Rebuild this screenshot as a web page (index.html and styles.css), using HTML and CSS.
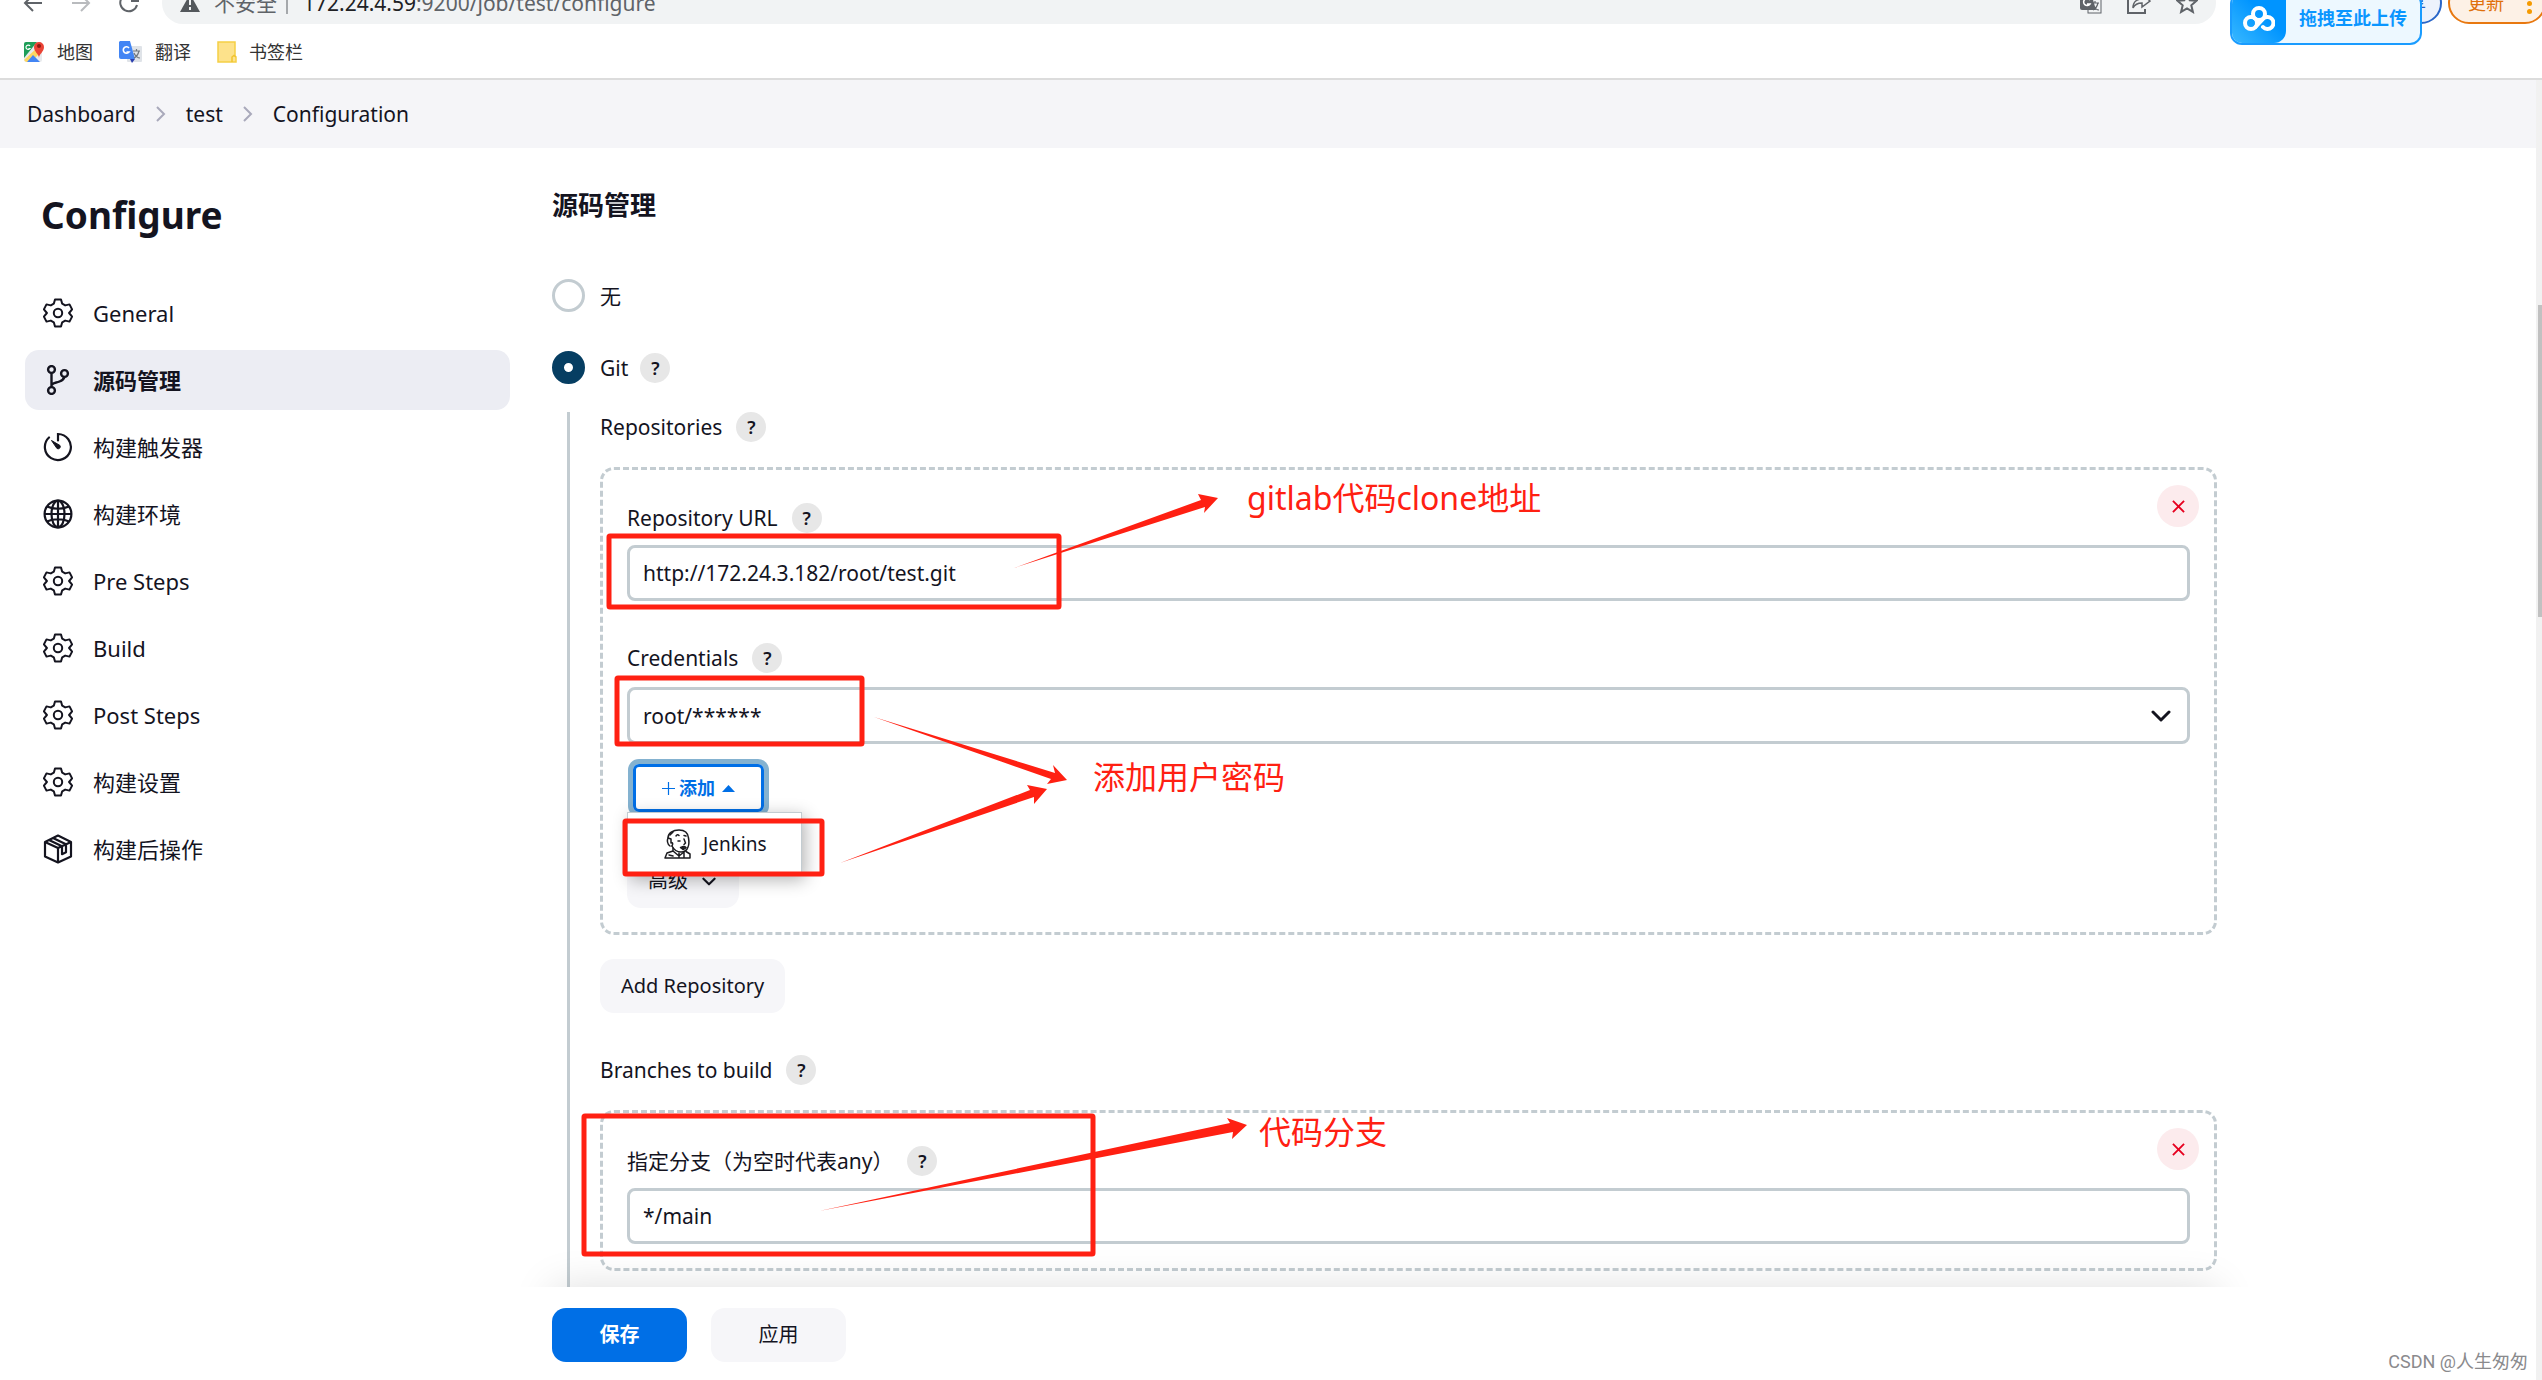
FILE: index.html
```html
<!DOCTYPE html>
<html lang="zh-CN">
<head>
<meta charset="utf-8">
<title>test Config [Jenkins]</title>
<link rel="stylesheet" href="styles.css">
</head>
<body>
<svg class="symbols" aria-hidden="true">
  <symbol id="gear" viewBox="0 0 30 30">
    <path d="M12 1.500h6l1.200 4.200 3 1.700 4.300-1 2.600 5-3 3.600 3 3.600-2.600 5-4.300-1-3 1.700-1.200 4.200h-6l-1.200-4.200-3-1.700-4.300 1-2.600-5 3-3.600-3-3.600 2.600-5 4.300 1 3-1.700z" fill="none" stroke="currentColor" stroke-width="2" stroke-linejoin="round"/>
    <circle cx="15" cy="15" r="4.200" fill="none" stroke="currentColor" stroke-width="2"/>
  </symbol>
  <symbol id="chevron-down" viewBox="0 0 20 12">
    <path d="M2 2l8 8 8-8" fill="none" stroke="currentColor" stroke-width="3" stroke-linecap="round" stroke-linejoin="round"/>
  </symbol>
  <symbol id="cross" viewBox="0 0 14 14">
    <path d="M1 1l12 12M13 1L1 13" stroke="currentColor" stroke-width="2"/>
  </symbol>
</svg>

<header class="browser">
  <div class="toolbar">
    <button class="nav" aria-label="Back"><svg width="20" height="20" viewBox="0 0 20 20"><path d="M19 10H2M10 2l-8 8 8 8" fill="none" stroke="#5f6368" stroke-width="2"/></svg></button>
    <button class="nav" aria-label="Forward"><svg width="20" height="20" viewBox="0 0 20 20"><path d="M1 10h17M10 2l8 8-8 8" fill="none" stroke="#b9bbbe" stroke-width="2"/></svg></button>
    <button class="nav" aria-label="Reload"><svg width="20" height="20" viewBox="0 0 20 20"><path d="M18 12a8.500 8.500 0 1 1-2-8M19 1v7h-7" fill="none" stroke="#5f6368" stroke-width="2"/></svg></button>
    <div class="address">
      <svg width="20" height="18" viewBox="0 0 20 18"><path d="M10 0l10 18H0z" fill="#54585c"/><path d="M10 6v5M10 13v3" stroke="#f1f3f4" stroke-width="2"/></svg>
      <span class="insecure">不安全</span>
      <span class="divider"></span>
      <span class="url"><b>172.24.4.59</b>:9200/job/test/configure</span>
      <span class="address-actions">
        <svg width="22" height="22" viewBox="0 0 22 22"><rect x="8" y="6" width="13" height="15" fill="#f1f3f4" stroke="#5f6368" stroke-width="1"/><path d="M0 1h11l5 17H2a2 2 0 0 1-2-2z" fill="#5f6368"/><path d="M10 8a3.500 3.500 0 1 0 0 4H7" fill="none" stroke="#fff" stroke-width="1.500"/><path d="M12 11h7M15 9v2M18 11c-1 4-3 6-5 7M13 13c1 3 4 5 6 5" fill="none" stroke="#5f6368" stroke-width="1.200"/></svg>
        <svg width="24" height="22" viewBox="0 0 24 22"><path d="M6 6H1v15h17v-4" fill="none" stroke="#5f6368" stroke-width="2"/><path d="M6 16c0-7 5-9 9-9V2l8 7-8 6v-4c-4 0-7 1-9 5z" fill="none" stroke="#5f6368" stroke-width="1.500"/></svg>
        <svg width="22" height="22" viewBox="0 0 22 22"><path d="M11 2l2.700 6.200 6.800.6-5.200 4.500 1.600 6.600L11 16.400 5.100 19.900l1.600-6.600L1.500 8.800l6.800-.6z" fill="none" stroke="#5f6368" stroke-width="2"/></svg>
      </span>
    </div>
    <div class="toolbar-end">
      <button class="pill pill-share">分享</button>
      <button class="pill pill-update">更新<span class="dots"><i></i><i></i><i></i></span></button>
    </div>
  </div>
  <nav class="bookmarks">
    <a href="#maps">
      <svg width="22" height="22" viewBox="0 0 22 22"><rect x="1" y="1" width="18" height="20" rx="2" fill="#e8eaed"/><path d="M1 3a2 2 0 0 1 2-2h11L1 17z" fill="#1e9e58"/><path d="M1 19L15 6l4 4-11 11H3z" fill="#fdd663"/><path d="M4 21l6-7 7 7z" fill="#4285f4"/><path d="M16 17c0-4-5-6-5-11a5 5 0 0 1 10 0c0 5-5 7-5 11z" fill="#ea4335"/><circle cx="16" cy="5" r="2" fill="#8c1a12"/><path d="M7 5a2.200 2.200 0 1 0 0 2.500H5.500" fill="none" stroke="#fff" stroke-width="1.200"/></svg>
      地图</a>
    <a href="#translate">
      <svg width="24" height="22" viewBox="0 0 24 22"><rect x="8" y="5" width="15" height="16" rx="1" fill="#dfe3e8"/><path d="M1 0h10l5 18H2a2 2 0 0 1-2-2V1z" fill="#4285f4"/><path d="M11 18h5l-3 4z" fill="#2b3fae"/><path d="M10 7a3.200 3.200 0 1 0 0 4H7.500" fill="none" stroke="#fff" stroke-width="1.600"/><path d="M14 10h7M17.500 8v2M20 10c-1 4-3 6-5 7M15 12c1 3 4 5 6 5" fill="none" stroke="#70787f" stroke-width="1.200"/></svg>
      翻译</a>
    <a href="#bar">
      <svg width="20" height="22" viewBox="0 0 20 22"><path d="M1 1h17v14l1 1v5H1z" fill="#fde28b" stroke="#f5cf45" stroke-width="1.500"/><path d="M15 21v-5l2-1.500 2 1.500" fill="none" stroke="#f0c32f" stroke-width="1.500"/></svg>
      书签栏</a>
  </nav>
  <button class="upload">
    <span class="upload-logo"><svg width="32" height="26" viewBox="0 0 32 26"><g fill="none" stroke="#fff" stroke-width="4"><circle cx="16" cy="8" r="6"/><circle cx="8" cy="17" r="6"/><path d="M12.500 21l7.500-8a6 6 0 1 1 0 8" stroke-linecap="round"/></g></svg></span>
    <span class="upload-text">拖拽至此上传</span>
  </button>
</header>

<div class="app">
  <div class="page">
    <nav class="breadcrumbs">
      <a href="#dashboard">Dashboard</a>
      <svg width="10" height="16" viewBox="0 0 10 16"><path d="M1 1l7 7-7 7" fill="none" stroke="#a9a9bb" stroke-width="2"/></svg>
      <a href="#test">test</a>
      <svg width="10" height="16" viewBox="0 0 10 16"><path d="M1 1l7 7-7 7" fill="none" stroke="#a9a9bb" stroke-width="2"/></svg>
      <a href="#configuration">Configuration</a>
    </nav>

    <div class="columns">
      <aside class="sidebar">
        <h1>Configure</h1>
        <nav class="tasks">
          <a href="#general"><svg><use href="#gear"/></svg>General</a>
          <a href="#scm" class="active"><svg viewBox="0 0 30 30"><g fill="none" stroke="currentColor" stroke-width="2.400"><circle cx="8.500" cy="4.500" r="3.400"/><circle cx="8.500" cy="25.500" r="3.400"/><circle cx="21.500" cy="8.500" r="3.400"/><path d="M8.500 8v14M8.500 20c2-3 5-2 8-3.500 3-1.200 4.500-3 5-4.500"/></g></svg>源码管理</a>
          <a href="#triggers"><svg viewBox="0 0 30 30"><path d="M6 5.500A13 13 0 1 0 15 2v6.500" fill="none" stroke="currentColor" stroke-width="2.200" stroke-linecap="round"/><path d="M8.500 8.500l8.500 5a2.200 2.200 0 0 1-3 3z" fill="currentColor" stroke="currentColor" stroke-linejoin="round"/></svg>构建触发器</a>
          <a href="#environment"><svg viewBox="0 0 30 30"><g fill="none" stroke="currentColor" stroke-width="2.200"><circle cx="15" cy="15" r="13.400"/><ellipse cx="15" cy="15" rx="6.500" ry="13.400"/><path d="M15 1.600v26.800M1.600 15h26.800M4 7.500c6 3 16 3 22 0M4 22.500c6-3 16-3 22 0"/></g></svg>构建环境</a>
          <a href="#pre"><svg><use href="#gear"/></svg>Pre Steps</a>
          <a href="#build"><svg><use href="#gear"/></svg>Build</a>
          <a href="#post"><svg><use href="#gear"/></svg>Post Steps</a>
          <a href="#settings"><svg><use href="#gear"/></svg>构建设置</a>
          <a href="#actions"><svg viewBox="0 0 30 30"><g fill="none" stroke="currentColor" stroke-width="2.200" stroke-linejoin="round"><path d="M15 1.500L28 8v14.500L15 28.500 2 22.500V8z"/><path d="M2 8l13 6 13-6M15 14v14.500M6 6l13 6.200v8l4-2v-8L10 4"/></g></svg>构建后操作</a>
        </nav>
      </aside>

      <main class="config">
        <form class="form">
          <h2>源码管理</h2>
          <div class="choice">
            <input type="radio" name="scm" id="scm-none"><label for="scm-none">无</label>
          </div>
          <div class="choice">
            <input type="radio" name="scm" id="scm-git" checked><label for="scm-git">Git</label><button type="button" class="help">?</button>
          </div>
          <div class="nested">
            <div class="caption"><span>Repositories</span><button type="button" class="help">?</button></div>
            <section class="chunk">
              <button type="button" class="remove" aria-label="Remove"><svg width="13" height="13"><use href="#cross"/></svg></button>
              <div class="caption"><label for="url">Repository URL</label><button type="button" class="help">?</button></div>
              <input class="field" id="url" type="text" value="http://172.24.3.182/root/test.git">
              <div class="caption next"><label for="cred">Credentials</label><button type="button" class="help">?</button></div>
              <div class="select">
                <select class="field" id="cred"><option>root/******</option></select>
                <svg width="20" height="12"><use href="#chevron-down"/></svg>
              </div>
              <div class="add">
                <button type="button" class="add-button">
                  <svg width="13" height="13" viewBox="0 0 13 13"><path d="M6.500 0v13M0 6.500h13" stroke="currentColor" stroke-width="1.200"/></svg>添加<svg class="caret" width="13" height="7" viewBox="0 0 13 7"><path d="M0 7l6.500-7L13 7z" fill="currentColor"/></svg>
                </button>
                <div class="menu">
                  <a href="#jenkins">
                    <svg width="27" height="30" viewBox="0 0 27 30"><g fill="none" stroke="#1b1b1f" stroke-width="1.500" stroke-linejoin="round" stroke-linecap="round"><path d="M6 17C3 15 3 11 4 9c0-5 5-8 11-8 6 0 9 3 9.500 8 .7 4 .5 7-.5 9-1 3-4 5-7 5-4 0-7-2-9-6"/><path d="M4 9l3 1v4c2-1 2 1 1 3M6 6l3-3M12 7c1-1.500 2-1.500 3-.5M20 6.500l2 .5M14 12h2M20 10l1.500 4-1.500 1.500M17 18.500c2-1.500 4-1 5 0"/><path d="M9 19v3l-6 2-2 5h25v-4l-4-2.500M9 22l6 5 5-4M15 24v5M20 23v6M5 26l4 1"/><path d="M16.500 18.500l5 .5-2.500 1.500z" fill="#1b1b1f"/></g></svg>
                    Jenkins</a>
                </div>
              </div>
              <button type="button" class="button advanced">高级<svg width="14" height="9"><use href="#chevron-down"/></svg></button>
            </section>
            <button type="button" class="button add-repo">Add Repository</button>
            <div class="caption next"><span>Branches to build</span><button type="button" class="help">?</button></div>
            <section class="chunk">
              <button type="button" class="remove" aria-label="Remove"><svg width="13" height="13"><use href="#cross"/></svg></button>
              <div class="caption"><label for="branch">指定分支（为空时代表any）</label><button type="button" class="help">?</button></div>
              <input class="field" id="branch" type="text" value="*/main">
            </section>
          </div>
        </form>
        <div class="bottom-bar">
          <button class="button primary">保存</button>
          <button class="button">应用</button>
        </div>
      </main>
    </div>
  </div>
  <div class="scrollbar"><div class="thumb"></div></div>
</div>

<svg class="annotations">
  <g fill="none" stroke="#ff2012" stroke-width="5" stroke-linejoin="round">
    <rect x="609" y="536" width="450" height="71" rx="1"/>
    <rect x="617" y="678" width="245" height="66" rx="1"/>
    <rect x="625" y="821" width="197" height="53" rx="1"/>
    <rect x="584" y="1116" width="509" height="138" rx="1"/>
  </g>
  <g fill="#ff2012">
    <path d="M1014 568L1201 500 1198 494 1218 498 1204 513 1205 507z"/>
    <path d="M874 717L1055 773 1053 765 1067 780 1047 784 1051 779z"/>
    <path d="M840 863L1030 790 1027 785 1047 789 1034 804 1034 797z"/>
    <path d="M819 1211L1230 1123 1227 1118 1247 1125 1232 1139 1233 1132z"/>
  </g>
  <g class="note">
    <text x="1247" y="510">gitlab代码clone地址</text>
    <text x="1093" y="789">添加用户密码</text>
    <text x="1259" y="1144">代码分支</text>
  </g>
</svg>
<div class="watermark">CSDN @人生匆匆</div>
</body>
</html>
```

FILE: styles.css
```css
* { box-sizing: border-box; }

body {
  margin: 0;
  height: 100vh;
  display: flex;
  flex-direction: column;
  position: relative;
  overflow: hidden;
  background: #fff;
  color: #14141f;
  font: 21px/30px "Noto Sans", "Noto Sans CJK SC", sans-serif;
}

button, input, select { font: inherit; color: inherit; margin: 0; }
button { border: 0; padding: 0; background: none; cursor: pointer; }
a { color: inherit; text-decoration: none; }
svg { flex: none; }
.symbols { position: absolute; width: 0; height: 0; }

/* Browser chrome */
.browser { position: relative; flex: none; border-bottom: 2px solid #dcdcdc; }
.toolbar {
  height: 24px;
  padding-left: 23px;
  display: flex;
  align-items: flex-end;
  gap: 28px;
  overflow: hidden;
}
.nav { height: 42px; display: flex; align-items: center; }
.address {
  flex: 1;
  height: 42px;
  margin-left: -5px;
  padding: 0 18px;
  display: flex;
  align-items: center;
  border-radius: 21px;
  background: #f1f3f4;
  color: #5f6368;
}
.insecure { margin-left: 14px; }
.divider { width: 2px; height: 22px; margin: 0 15px 0 9px; background: #a5a8ab; }
.url b { font-weight: 400; color: #202124; }
.address-actions { margin-left: auto; display: flex; gap: 25px; }
.toolbar-end { width: 298px; display: flex; justify-content: flex-end; gap: 6px; }
.pill { height: 42px; border: 2px solid; border-radius: 21px; font-size: 18px; }
.pill-share { width: 130px; padding-right: 14px; text-align: right; border-color: #2a66c8; background: #edf2fc; color: #2a5fc4; }
.pill-update {
  width: 98px;
  margin-right: -4px;
  padding: 0 12px 0 18px;
  display: flex;
  align-items: center;
  justify-content: space-between;
  border-color: #e8780f;
  background: #fdf1e6;
  color: #e0700a;
}
.dots { display: grid; gap: 3px; }
.dots i { width: 5px; height: 5px; border-radius: 50%; background: #f59a00; }
.bookmarks { height: 54px; padding: 2px 0 0 23px; display: flex; align-items: center; gap: 26px; font-size: 18px; color: #333; }
.bookmarks a { display: flex; align-items: center; gap: 12px; }
.upload {
  position: absolute;
  right: 120px;
  top: -8px;
  width: 192px;
  height: 53px;
  display: flex;
  border: 2px solid #1a9cff;
  border-radius: 12px;
  background: #edf8ff;
  overflow: hidden;
}
.upload-logo {
  width: 54px;
  height: 100%;
  display: flex;
  align-items: center;
  justify-content: center;
  border-radius: 0 0 12px 0;
  background: linear-gradient(45deg, #38b8ff, #0094ff 60%);
}
.upload-text { flex: 1; line-height: 49px; font-size: 18px; font-weight: 700; color: #0a96ff; }

/* Application frame */
.app { flex: 1; min-height: 0; display: flex; }
.page { flex: 1; min-width: 0; display: flex; flex-direction: column; }
.scrollbar { width: 6px; padding-left: 2px; background: #f1f1f1; }
.thumb { height: 24%; margin-top: 225px; background: #c1c1c1; }
.breadcrumbs {
  flex: none;
  height: 68px;
  padding-left: 27px;
  display: flex;
  align-items: center;
  gap: 20px;
  background: #f5f5f8;
}
.columns { flex: 1; min-height: 0; display: flex; }

/* Sidebar */
.sidebar { width: 552px; padding: 43px 42px 0 25px; }
.sidebar h1 { margin: 0 0 44px 16px; font-size: 37px; line-height: 48px; }
.tasks { display: grid; gap: 7px; }
.tasks a {
  height: 60px;
  padding-left: 18px;
  display: flex;
  align-items: center;
  gap: 20px;
  border-radius: 14px;
  font-size: 22px;
}
.tasks svg { width: 30px; height: 30px; }
.tasks .active { background: #ecedf3; font-weight: 700; }

/* Configuration form */
.config { flex: 1; max-width: 1665px; display: flex; flex-direction: column; }
.form { flex: 1; min-height: 0; padding-top: 39px; display: flex; flex-direction: column; }
h2 { margin: 0 0 56px; font-size: 26px; line-height: 36px; }
.choice { height: 33px; display: flex; align-items: center; gap: 12px; }
.choice + .choice { margin-top: 39px; }
.choice label { margin-left: 3px; }
input[type="radio"] {
  appearance: none;
  width: 33px;
  height: 33px;
  border: 3px solid #c3ccd1;
  border-radius: 50%;
  background: #fff;
}
input[type="radio"]:checked { border: 12px solid #063e62; }
.nested { flex: 1; min-height: 0; margin: 28px 0 0 15px; padding-left: 30px; border-left: 3px solid #c3ccd1; }
.caption { height: 30px; display: flex; align-items: center; gap: 14px; }
.caption.next { margin-top: 42px; }
.help { width: 30px; height: 30px; border-radius: 50%; background: #e7e7e7; font-size: 18px; font-weight: 600; line-height: 30px; }
.chunk {
  position: relative;
  margin: 25px 0 24px;
  padding: 33px 24px 24px;
  border: 3px dashed #c3ccd1;
  border-radius: 14px;
}
.remove {
  position: absolute;
  top: 15px;
  right: 15px;
  width: 42px;
  height: 42px;
  display: flex;
  align-items: center;
  justify-content: center;
  border-radius: 50%;
  background: #fcebed;
  color: #e6001f;
}
.field {
  display: block;
  width: 100%;
  height: 56px;
  margin-top: 12px;
  padding: 0 13px;
  border: 3px solid #c3ccd1;
  border-radius: 8px;
  background: #fff;
}
.select { position: relative; margin-top: 14px; }
.select select { appearance: none; height: 57px; margin: 0; }
.select svg { position: absolute; right: 19px; top: 23px; }
.add { position: relative; margin: 20px 0 42px 6px; }
.add-button {
  height: 48px;
  width: 131px;
  display: flex;
  align-items: center;
  justify-content: center;
  gap: 4px;
  border: 3px solid #006fe6;
  border-radius: 6px;
  box-shadow: 0 0 0 5px #84b2d0;
  font-size: 18px;
  font-weight: 700;
  color: #006fe6;
}
.caret { margin-left: 3px; }
.menu {
  position: absolute;
  z-index: 1;
  top: 48px;
  left: -6px;
  width: 175px;
  padding: 16px 0;
  border: 1px solid #c3ccd1;
  background: #fff;
  box-shadow: 3px 4px 16px rgba(0, 0, 0, .3);
}
.menu a { display: flex; align-items: center; gap: 12px; padding-left: 36px; font-size: 19px; }
.button { height: 54px; border-radius: 14px; background: #f6f6f9; font-size: 20px; }
.advanced { display: flex; align-items: center; gap: 14px; padding: 0 23px 0 21px; }
.add-repo { padding: 0 21px; display: block; }
.bottom-bar {
  flex: none;
  position: relative;
  height: 93px;
  display: flex;
  align-items: flex-start;
  gap: 24px;
  padding-top: 21px;
  background: #fff;
  box-shadow: 0 0 40px rgba(0, 0, 0, .13);
  clip-path: inset(-50px -50px 0 -50px);
}
/* Keeps the side glow above the bar only */
.bottom-bar::before { content: ""; position: absolute; inset: 0 -60px; background: #fff; }
.bottom-bar .button { position: relative; width: 135px; }
.bottom-bar .primary { background: #006fe6; color: #fff; font-weight: 700; }

/* Overlaid notes */
.annotations { position: absolute; z-index: 2; inset: 0; width: 100%; height: 100%; pointer-events: none; }
.note { fill: #ff2012; font-size: 32px; }
.watermark {
  position: absolute;
  right: 14px;
  bottom: 4px;
  font: 18px/28px Roboto, "Noto Sans CJK SC", sans-serif;
  color: #8a8a8d;
}
```
